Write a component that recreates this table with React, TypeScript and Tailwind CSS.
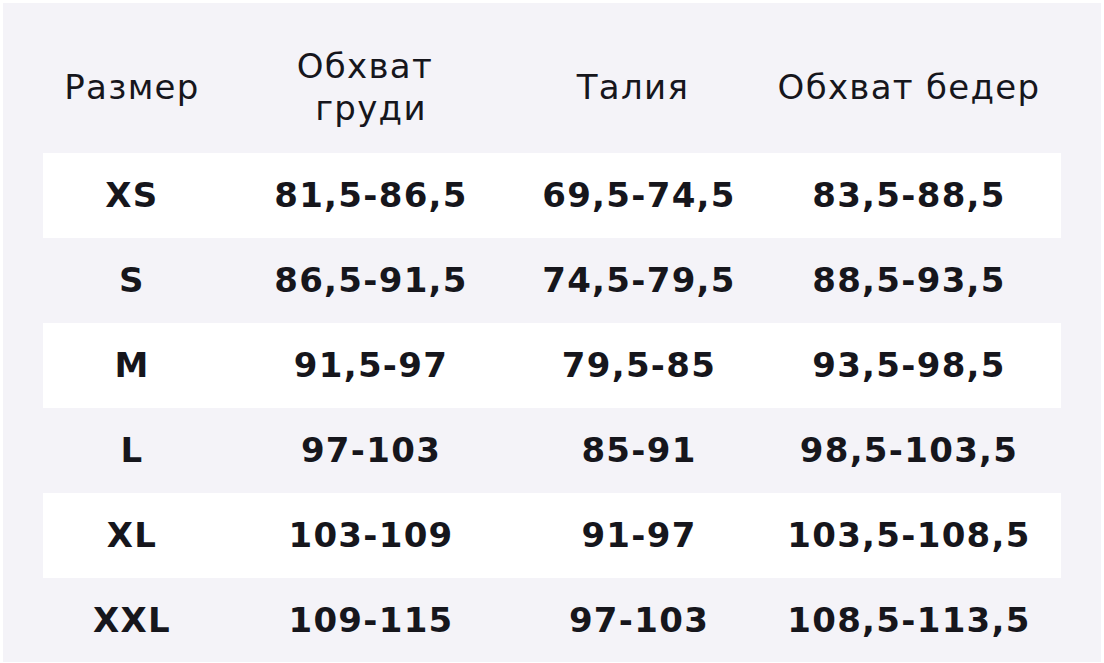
const rows = [
  ["XS", "81,5-86,5", "69,5-74,5", "83,5-88,5"],
  ["S", "86,5-91,5", "74,5-79,5", "88,5-93,5"],
  ["M", "91,5-97", "79,5-85", "93,5-98,5"],
  ["L", "97-103", "85-91", "98,5-103,5"],
  ["XL", "103-109", "91-97", "103,5-108,5"],
  ["XXL", "109-115", "97-103", "108,5-113,5"],
];

const cols = "grid grid-cols-[178px_300px_236px_304px]";

export default function App() {
  return (
    <div className="w-[1104px] h-[663px] bg-white pt-[3px] px-[3px] font-['DejaVu_Sans',sans-serif] text-[#16161c]">
      <div className="h-[659px] bg-[#f4f3f8] px-[40px] pt-[18px]">
        <div className={`${cols} h-[132px] items-center text-center text-[34px] leading-[42px] tracking-[1.3px]`}>
          <div>Размер</div>
          <div>
            Обхват&nbsp;
            <br />
            груди
          </div>
          <div>Талия&nbsp;</div>
          <div>Обхват бедер</div>
        </div>
        {rows.map((r, i) => (
          <div
            key={r[0]}
            className={`${cols} h-[85px] items-center text-center text-[34px] font-bold tracking-[1.3px] ${
              i % 2 === 0 ? "bg-white" : ""
            }`}
          >
            {r.map((c, j) => (
              <div key={j}>{c}</div>
            ))}
          </div>
        ))}
      </div>
    </div>
  );
}
